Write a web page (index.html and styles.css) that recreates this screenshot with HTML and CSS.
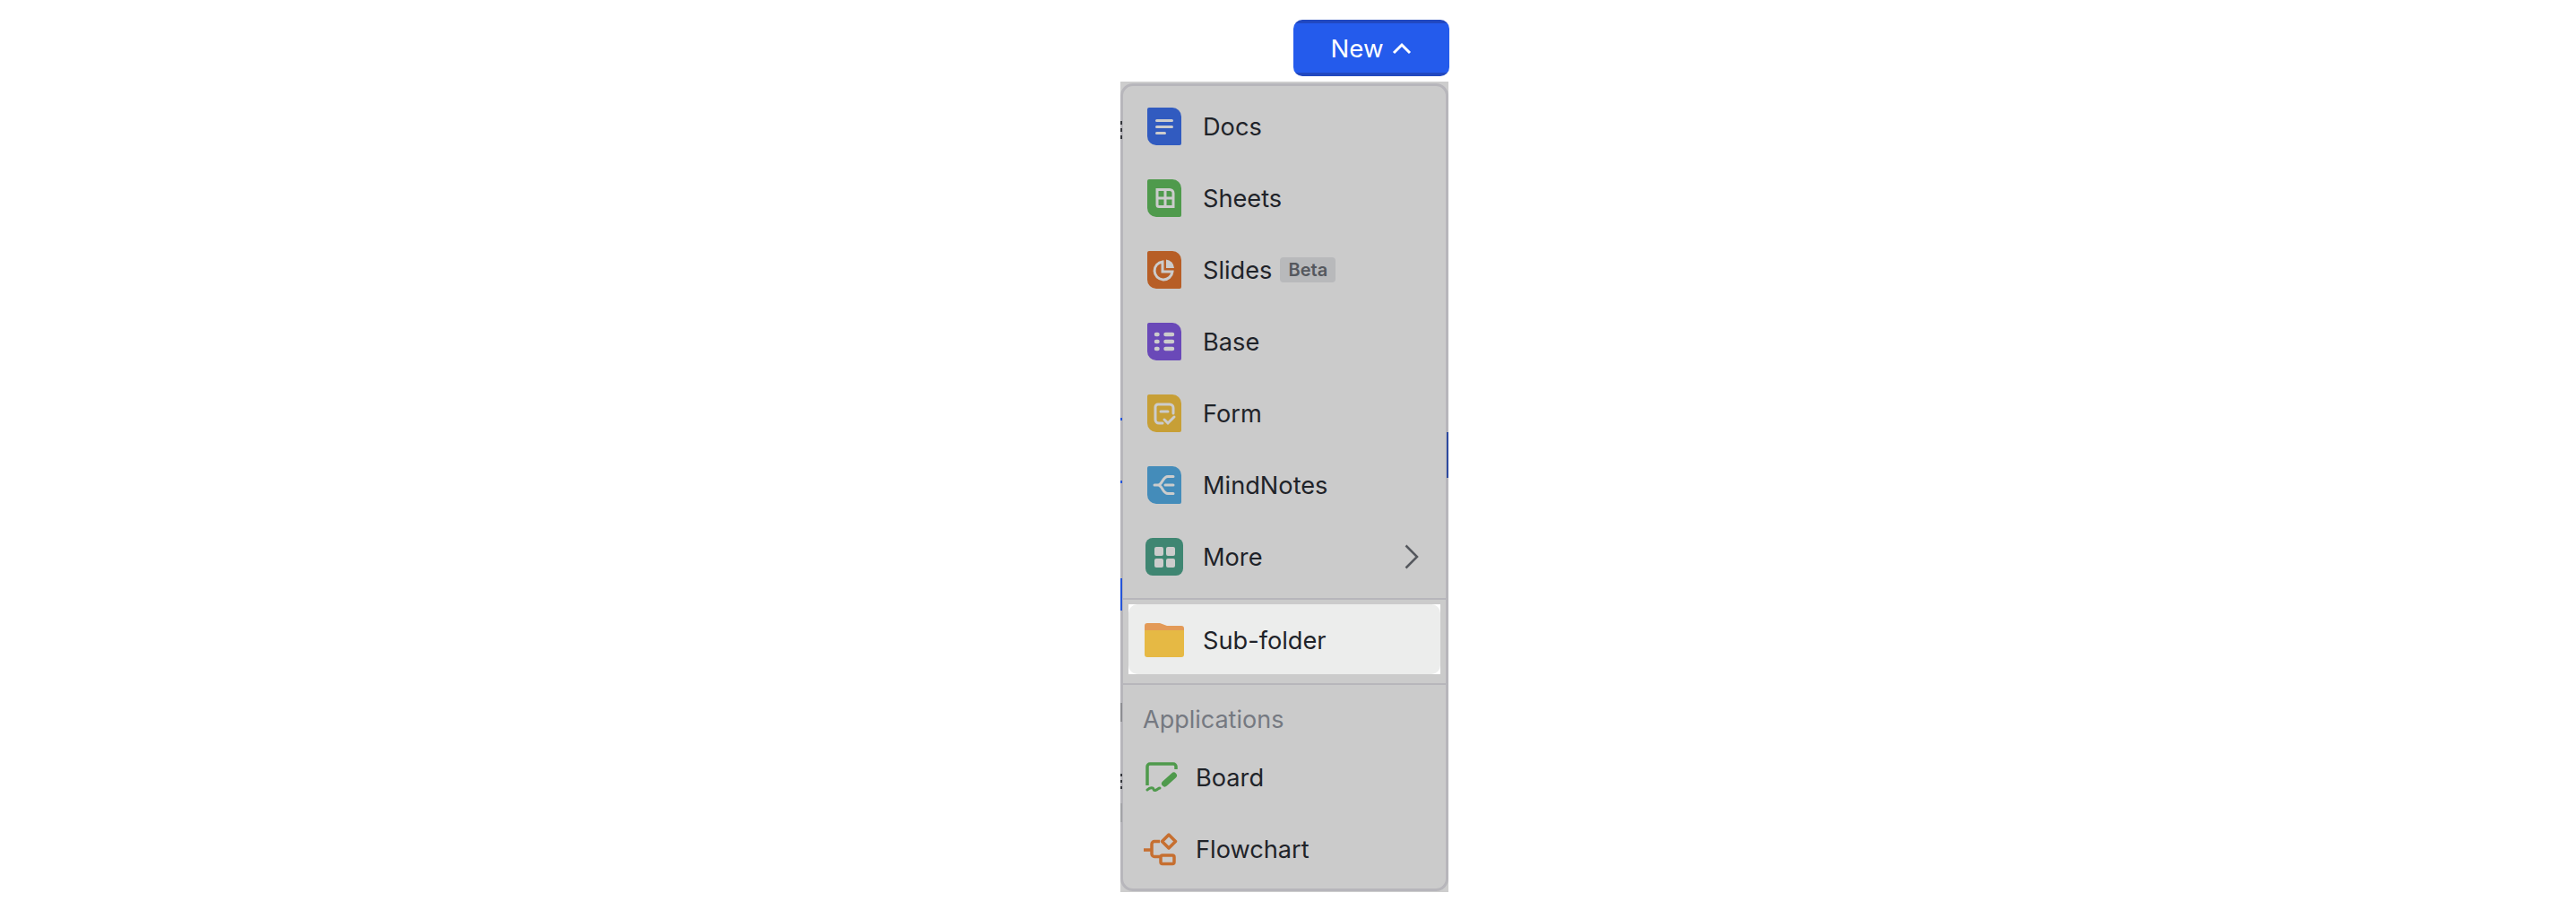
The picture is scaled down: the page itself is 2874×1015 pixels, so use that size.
FILE: index.html
```html
<!DOCTYPE html>
<html lang="en">
<head>
    <meta charset="UTF-8">
    <title>New menu</title>
    <link rel="stylesheet" href="styles.css">
</head>
<body>
    <div class="wrap">
        <button class="new-button">New
            <svg class="caret" width="22" height="14" viewBox="0 0 22 14"><path d="M2 12l9-9 9 9" fill="none" stroke="#fff" stroke-width="3"/></svg>
        </button>

        <div class="menu-frame">
            <div class="menu">
                <div class="menu-group">
                    <div class="item">
                        <svg class="icon" width="38" height="42" viewBox="0 0 38 42"><path class="docs" d="M2 0h26a10 10 0 0 1 10 10v30a2 2 0 0 1-2 2H10A10 10 0 0 1 0 32V2a2 2 0 0 1 2-2z"/><path d="M10.500 14.500h17M10.500 21.500h17M10.500 28.500h9" stroke="#ccc" stroke-width="3" stroke-linecap="round"/></svg>
                        <span>Docs</span>
                    </div>
                    <div class="item">
                        <svg class="icon" width="38" height="42" viewBox="0 0 38 42"><path class="sheets" d="M2 0h26a10 10 0 0 1 10 10v30a2 2 0 0 1-2 2H10A10 10 0 0 1 0 32V2a2 2 0 0 1 2-2z"/><path d="M11 11.500h14a4 4 0 0 1 4 4v15H13a2 2 0 0 1-2-2zM20 11.500v19M11 21h18" fill="none" stroke="#ccc" stroke-width="3"/></svg>
                        <span>Sheets</span>
                    </div>
                    <div class="item">
                        <svg class="icon" width="38" height="42" viewBox="0 0 38 42"><path class="slides" d="M2 0h26a10 10 0 0 1 10 10v30a2 2 0 0 1-2 2H10A10 10 0 0 1 0 32V2a2 2 0 0 1 2-2z"/><path d="M17 12a10 10 0 1 0 11 11H17z" fill="none" stroke="#ccc" stroke-width="3"/><path d="M21 9.500a10 10 0 0 1 9 9.500h-9z" fill="#ccc"/></svg>
                        <span>Slides</span>
                        <span class="beta">Beta</span>
                    </div>
                    <div class="item">
                        <svg class="icon" width="38" height="42" viewBox="0 0 38 42"><path class="base" d="M2 0h26a10 10 0 0 1 10 10v30a2 2 0 0 1-2 2H10A10 10 0 0 1 0 32V2a2 2 0 0 1 2-2z"/><path d="M10 13h1.500M10 21h1.500M10 29h1.500M20.500 13h7.500M20.500 21h7.500M20.500 29h7.500" stroke="#ccc" stroke-width="4.500" stroke-linecap="round"/></svg>
                        <span>Base</span>
                    </div>
                    <div class="item">
                        <svg class="icon" width="38" height="42" viewBox="0 0 38 42"><path class="form" d="M2 0h26a10 10 0 0 1 10 10v30a2 2 0 0 1-2 2H10A10 10 0 0 1 0 32V2a2 2 0 0 1 2-2z"/><path d="M17 32h-4a4 4 0 0 1-4-4V14a3 3 0 0 1 3-3h13a4 4 0 0 1 4 4v6M15 19h8" fill="none" stroke="#ccc" stroke-width="3" stroke-linecap="round"/><path d="M19 28l4 4 7-7" fill="none" stroke="#ccc" stroke-width="3" stroke-linecap="round"/></svg>
                        <span>Form</span>
                    </div>
                    <div class="item">
                        <svg class="icon" width="38" height="42" viewBox="0 0 38 42"><path class="mind" d="M2 0h26a10 10 0 0 1 10 10v30a2 2 0 0 1-2 2H10A10 10 0 0 1 0 32V2a2 2 0 0 1 2-2z"/><path d="M29 11.500h-6c-6 0-6 9.500-11 9.500H8M12 21c5 0 5 9.500 11 9.500h6M20 21h9" fill="none" stroke="#ccc" stroke-width="3" stroke-linecap="round"/></svg>
                        <span>MindNotes</span>
                    </div>
                    <div class="item">
                        <svg class="icon icon-more" width="42" height="42" viewBox="0 0 42 42"><rect class="more" width="42" height="42" rx="8"/><rect x="10" y="10" width="10" height="10" rx="2" fill="#ccc"/><rect x="23" y="10" width="10" height="10" rx="2" fill="#ccc"/><rect x="10" y="23" width="10" height="10" rx="2" fill="#ccc"/><rect x="23" y="23" width="10" height="10" rx="2" fill="#ccc"/></svg>
                        <span>More</span>
                        <svg class="chevron" width="16" height="28" viewBox="0 0 16 28"><path d="M1.500 1.500L14 14 1.500 26.500" fill="none" stroke="#55585e" stroke-width="2.500"/></svg>
                    </div>
                </div>

                <div class="menu-group folder-group">
                    <div class="folder-back">
                        <div class="item folder-item">
                            <svg class="icon icon-folder" width="44" height="38" viewBox="0 0 44 38"><path d="M0 3a3 3 0 0 1 3-3h14l8 3h16a3 3 0 0 1 3 3v4H0z" fill="#e39a57"/><path d="M0 8h44v27a3 3 0 0 1-3 3H3a3 3 0 0 1-3-3z" fill="#e6b944"/></svg>
                            <span>Sub-folder</span>
                        </div>
                    </div>
                </div>

                <div class="menu-group apps-group">
                    <div class="group-title">Applications</div>
                    <div class="item app-item">
                        <svg class="icon" width="36" height="34" viewBox="0 0 36 34"><path d="M2 26V5a3 3 0 0 1 3-3h26a3 3 0 0 1 3 3v3" fill="none" stroke="#4f9a4c" stroke-width="3.500"/><path d="M21.500 24l10-9" stroke="#4f9a4c" stroke-width="7" stroke-linecap="round"/><path d="M2 31c2-2 4-2.500 6-2s0 3 3 2.500 3-2.500 5-2.500" fill="none" stroke="#4f9a4c" stroke-width="3" stroke-linecap="round"/></svg>
                        <span>Board</span>
                    </div>
                    <div class="item app-item">
                        <svg class="icon icon-flow" width="38" height="37" viewBox="0 0 38 37"><path d="M0 19h8M18 9.500h-6a3 3 0 0 0-3 3v11a3 3 0 0 0 3 3h6" fill="none" stroke="#c66f30" stroke-width="3.500"/><path d="M28 2l7.500 7.500L28 17l-7.500-7.500z" fill="none" stroke="#c66f30" stroke-width="3.500" stroke-linejoin="round"/><rect x="19" y="25" width="15" height="9.500" rx="2" fill="none" stroke="#c66f30" stroke-width="3.500"/></svg>
                        <span>Flowchart</span>
                    </div>
                </div>
            </div>

            <!-- bits of the page behind that show past the menu edge -->
            <i class="leak dot dot-1"></i>
            <i class="leak dot dot-2"></i>
            <i class="leak dot dot-3"></i>
            <i class="leak blue blue-1"></i>
            <i class="leak blue blue-2"></i>
            <i class="leak blue blue-3"></i>
            <i class="leak blue blue-4"></i>
            <i class="leak grey grey-1"></i>
            <i class="leak grey grey-2"></i>
            <i class="leak dot dot-4"></i>
            <i class="leak dot dot-5"></i>
            <i class="leak dot dot-6"></i>
        </div>
    </div>
</body>
</html>
```

FILE: styles.css
```css
* {
    margin: 0;
    padding: 0;
    box-sizing: border-box;
}

body {
    font-family: Inter, 'Noto Sans', sans-serif;
    background: #fff;
    color: #1f2329;
}

.wrap {
    width: 368px;
    margin-left: 1250px;
    padding-top: 22px;
    display: flex;
    flex-direction: column;
    align-items: flex-end;
}

.new-button {
    width: 174px;
    height: 63px;
    background: linear-gradient(#2148c0 4px, #245bec 4px, #245bec 59px, #2148c0 59px);
    border: none;
    border-radius: 10px;
    color: #fff;
    font-family: inherit;
    font-size: 27.6px;
    display: flex;
    align-items: center;
    justify-content: center;
    gap: 10px;
    margin-right: 1px;
}

.menu-frame {
    position: relative;
    width: 366px;
    height: 904px;
    margin-top: 6px;
    margin-right: 2px;
    padding: 2px 0 1px;
    background: #cdcdcd;
}

.menu {
    height: 100%;
    background: #cbcbcb;
    border: 3px solid #b7b6bb;
    border-radius: 14px;
}

.menu-group {
    padding-top: 5px;
    padding-bottom: 6px;
}

.item {
    height: 80px;
    display: flex;
    align-items: center;
    font-size: 27.2px;
    padding-left: 27px;
}

.icon {
    margin-right: 24px;
    flex-shrink: 0;
}

.icon-more {
    margin-left: -2px;
    margin-right: 22px;
}

.icon-folder {
    margin-left: -3px;
    margin-right: 21px;
}

.docs { fill: #315bc0; }
.sheets { fill: #4f9a4c; }
.slides { fill: #b75e26; }
.base { fill: #6a49b8; }
.form { fill: #c79f36; }
.mind { fill: #448cba; }
.more { fill: #3f8672; }

.beta {
    margin-left: 9px;
    height: 28px;
    padding: 0 9px;
    background: #b8b9bb;
    color: #55585e;
    border-radius: 4px;
    font-size: 20px;
    font-weight: 600;
    line-height: 28px;
}

.chevron {
    margin-left: auto;
    margin-right: 30px;
}

.folder-group {
    border-top: 2px solid #b7b6bb;
    padding: 5px 6px 10px;
}

.folder-back {
    background: #fff;
}

.folder-item {
    height: 78px;
    padding-left: 21px;
    padding-top: 2px;
    background: #ecedec;
    border-radius: 10px;
}

.apps-group {
    border-top: 2px solid #b7b6bb;
    padding-top: 19px;
    padding-bottom: 0;
}

.group-title {
    font-size: 27px;
    color: #757981;
    padding-left: 22px;
    height: 40px;
    line-height: 40px;
    margin-bottom: 4px;
}

.app-item {
    padding-left: 25px;
}

.app-item .icon {
    margin-right: 20px;
}

.app-item .icon-flow {
    margin-left: -2px;
    margin-right: 20px;
}

.leak {
    position: absolute;
    display: block;
    left: 0;
    width: 2px;
}

.dot { height: 4px; background: #33353a; }
.dot-1 { top: 44px; }
.dot-2 { top: 52px; }
.dot-3 { top: 60px; }
.dot-4 { top: 772px; height: 3px; }
.dot-5 { top: 779px; height: 3px; }
.dot-6 { top: 786px; height: 3px; }

.blue { background: #2454d8; }
.blue-1 { top: 375px; height: 3px; }
.blue-2 { top: 445px; height: 3px; }
.blue-3 { top: 554px; height: 36px; }
.blue-4 { top: 391px; height: 51px; left: 364px; background: #2d4aa0; }

.grey { background: #8d8e92; }
.grey-1 { top: 693px; height: 21px; }
.grey-2 { top: 805px; height: 21px; background: #a3a4a7; }
```
